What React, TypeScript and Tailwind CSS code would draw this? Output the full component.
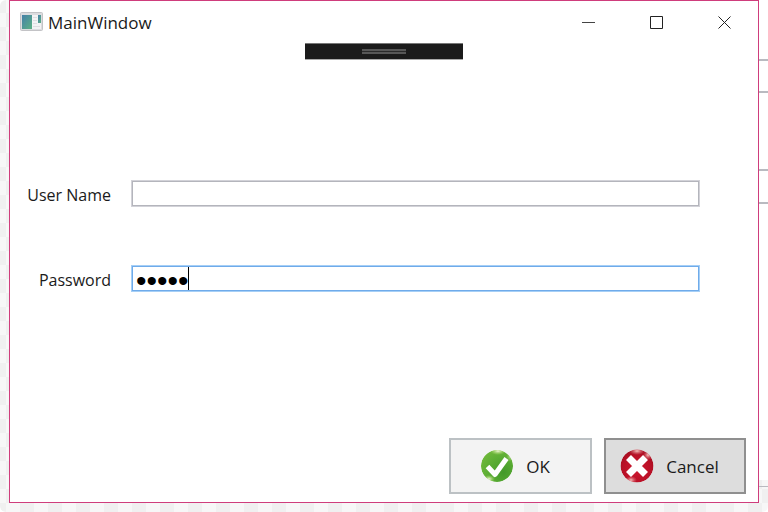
import { useState } from "react";

function AppIcon() {
  return (
    <svg width="24" height="20" viewBox="0 0 24 20" aria-hidden="true">
      <defs>
        <linearGradient id="pane" x1="0" y1="0" x2="1" y2="1">
          <stop offset="0" stopColor="#4580a8" />
          <stop offset="1" stopColor="#5db184" />
        </linearGradient>
      </defs>
      <rect x="0.5" y="0.5" width="22" height="18" rx="1" fill="#dcdcdf" stroke="#c3c3c6" />
      <rect x="2" y="3" width="19" height="14" fill="#f3f3f4" />
      <rect x="2" y="3" width="10" height="14" fill="url(#pane)" />
      <rect x="18" y="3" width="3" height="8" fill="url(#pane)" />
      <path d="M13 5.500h4M13 8.500h4M13 11.500h4M13 14.500h7" stroke="#dedee1" />
    </svg>
  );
}

function OkIcon() {
  return (
    <svg width="34" height="34" viewBox="0 0 34 34" aria-hidden="true">
      <defs>
        <radialGradient id="green" cx="0.7" cy="0.7" r="0.8">
          <stop offset="0" stopColor="#43992a" />
          <stop offset="0.5" stopColor="#58ab32" />
          <stop offset="1" stopColor="#6fb83a" />
        </radialGradient>
        <radialGradient id="shine">
          <stop offset="0" stopColor="#f1f8d8" />
          <stop offset="1" stopColor="#b4dc6c" stopOpacity="0" />
        </radialGradient>
        <clipPath id="disc">
          <circle cx="17" cy="17" r="16" />
        </clipPath>
      </defs>
      <g clipPath="url(#disc)">
        <circle cx="17" cy="17" r="16" fill="url(#green)" />
        <ellipse cx="18" cy="2" rx="8" ry="4" fill="url(#shine)" />
        <ellipse cx="9" cy="30" rx="6" ry="4" fill="url(#shine)" />
        <ellipse cx="30" cy="8" rx="4" ry="5" fill="url(#shine)" opacity="0.5" />
      </g>
      <path d="M7.500 17.500l7.500 8L26.500 9.500" fill="none" stroke="#fff" strokeWidth="5" strokeLinejoin="round" />
    </svg>
  );
}

function CancelIcon() {
  return (
    <svg width="34" height="34" viewBox="0 0 34 34" aria-hidden="true">
      <defs>
        <radialGradient id="red" cx="0.5" cy="0.6" r="0.6">
          <stop offset="0" stopColor="#cf1830" />
          <stop offset="0.7" stopColor="#b91026" />
          <stop offset="1" stopColor="#a30d20" />
        </radialGradient>
        <radialGradient id="glow">
          <stop offset="0" stopColor="#f6c3bd" />
          <stop offset="1" stopColor="#e0707c" stopOpacity="0" />
        </radialGradient>
        <clipPath id="ball">
          <circle cx="17" cy="17" r="16.500" />
        </clipPath>
      </defs>
      <g clipPath="url(#ball)">
        <circle cx="17" cy="17" r="16.500" fill="url(#red)" />
        <ellipse cx="17" cy="2" rx="8" ry="4" fill="url(#glow)" />
        <ellipse cx="28" cy="6" rx="5" ry="5" fill="url(#glow)" />
        <ellipse cx="11" cy="31" rx="6" ry="4" fill="url(#glow)" />
      </g>
      <path d="M8.500 8.500l17 17M25.500 8.500l-17 17" stroke="#fff" strokeWidth="7" />
    </svg>
  );
}

export default function App() {
  const [userName, setUserName] = useState("");
  const [password, setPassword] = useState("12345");

  return (
    <div className="flex min-h-screen rounded-l-md rounded-br-md bg-[repeating-conic-gradient(#f0f0f0_0_25%,#f7f7f7_0_50%)] bg-[length:28px_28px] bg-[position:6px_-1px] pl-[9px] font-['Open_Sans','Noto_Sans',sans-serif] text-[17px] leading-6 text-[#1a1a1a]">
      <main className="mb-[9px] flex flex-1 flex-col border border-[#cf3d7c] bg-white">
        <header className="flex h-[42px] items-center pl-[10px]">
          <AppIcon />
          <h1 className="ml-1 flex-1 pt-0.5">MainWindow</h1>
          <button type="button" aria-label="Minimize" className="flex h-full w-[68px] items-center justify-center">
            <svg width="13" height="13" stroke="#444"><path d="M0 6.500h13" /></svg>
          </button>
          <button type="button" aria-label="Maximize" className="flex h-full w-[68px] items-center justify-center">
            <svg width="13" height="13" fill="none" stroke="#222"><path d="M.5.500h12v12H.5z" /></svg>
          </button>
          <button type="button" aria-label="Close" className="flex h-full w-[68px] items-center justify-center">
            <svg width="13" height="13" stroke="#222"><path d="M.5.500l12 12M12.500.500l-12 12" /></svg>
          </button>
        </header>

        <div className="mx-auto flex h-[17px] w-[158px] items-center justify-center border-t border-b border-t-[#777] border-b-[#aaa] bg-[#1b1b1b]">
          <div className="h-[5px] w-11 border-y-2 border-[#575757] bg-[#2a2a2a]" />
        </div>

        <form className="flex flex-1 flex-col" onSubmit={(e) => e.preventDefault()}>
          <div className="mt-[120px] mr-[58px] flex items-center">
            <label htmlFor="user-name" className="mr-5 w-[101px] pt-0.5 text-right text-base">User Name</label>
            <input
              id="user-name"
              type="text"
              value={userName}
              onChange={(e) => setUserName(e.target.value)}
              className="h-[27px] min-w-0 flex-1 border border-[#d2d2d8] px-1 shadow-[inset_0_0_0_1px_#b4b5bc] outline-none"
            />
          </div>
          <div className="mt-[58px] mr-[58px] flex items-center">
            <label htmlFor="password" className="mr-5 w-[101px] pt-0.5 text-right text-base">Password</label>
            <div className="relative flex min-w-0 flex-1">
              <input
                id="password"
                type="password"
                value={password}
                onChange={(e) => setPassword(e.target.value)}
                className="h-[27px] min-w-0 flex-1 border border-[#a6cff6] px-1 pt-1 font-['Liberation_Sans',sans-serif] text-[30px] leading-5 text-black caret-transparent shadow-[inset_0_0_0_1px_#6fabea] outline-none"
              />
              <span className="absolute top-[2px] left-[57px] h-[23px] w-px bg-black" />
            </div>
          </div>
          <div className="mt-auto mr-3 mb-2 flex justify-end gap-3">
            <button type="submit" className="flex h-14 w-[143px] items-center justify-center gap-3 border-2 border-[#bcc1c4] bg-[#f3f3f3] pr-[11px]">
              <OkIcon />
              <span className="pt-0.5">OK</span>
            </button>
            <button type="button" className="flex h-14 w-[142px] items-center justify-center gap-3 border-2 border-[#8f8f8f] bg-[#dddddd] pr-[11px]">
              <CancelIcon />
              <span className="pt-0.5">Cancel</span>
            </button>
          </div>
        </form>
      </main>

      <aside className="mb-[25px] flex w-[9px] flex-col border-b border-[#b9bac0]">
        <div className="flex flex-1 flex-col bg-white pt-[59px]">
          <div className="h-[34px] border-y-2 border-[#b9bac0]" />
          <div className="mt-[76px] h-[35px] border-y-2 border-[#b9bac0]" />
        </div>
        <div className="h-[6px]" />
      </aside>
    </div>
  );
}
